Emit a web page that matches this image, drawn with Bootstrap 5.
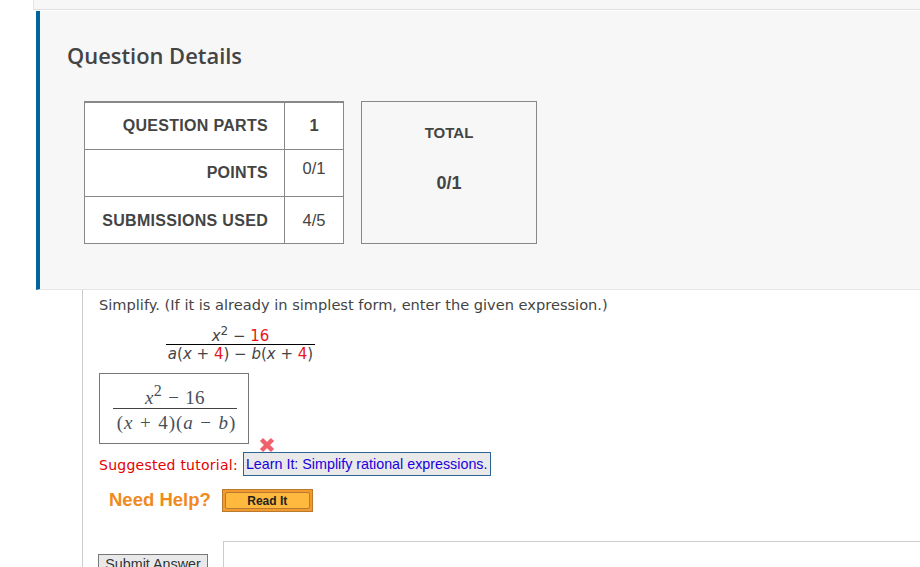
<!DOCTYPE html>
<html lang="en"><head><meta charset="utf-8">
<link href="https://cdn.jsdelivr.net/npm/bootstrap@5.3.0/dist/css/bootstrap.min.css" rel="stylesheet">
<style>
html,body{height:567px;overflow:hidden;background:#fff;}
body{font-family:"Liberation Sans",Arial,sans-serif;color:#444;}
.top-strip{margin-left:33px;height:10px;background:#f7f7f7;border-left:1px solid #e5e5e5;border-bottom:1px solid #e0e0e0;}
.details-panel{margin-left:36px;height:279px;margin-top:1px;background:#f7f7f7;border-left:4px solid #00659c;border-bottom:1px solid #e5e5e5;padding:30px 0 0 27px;}
.details-title{font-family:"Open Sans",sans-serif;font-size:21.9px;font-weight:600;line-height:30px;color:#444;margin:0;}
.tables-row{margin:30px 0 0 17px;gap:17px;}
.parts-table{width:260px;height:143px;background:#fff;border-collapse:collapse;border:1px solid #888;border-top-width:2px;font-size:16px;}
.parts-table tr{height:47px;}
.parts-table td,.parts-table th{border:1px solid #888;padding:0;}
.parts-table th{width:200px;text-align:right;padding-right:16px;font-weight:700;letter-spacing:.3px;}
.parts-table td{text-align:center;font-size:16.5px;}
.parts-table .cell-up{padding-bottom:8px;}
.parts-table .cell-down{padding-top:2px;}
.total-box{width:176px;height:143px;border:1px solid #888;text-align:center;font-size:15px;}
.total-label{font-weight:700;margin-top:21px;line-height:20px;}
.total-value{font-weight:700;margin-top:30px;line-height:20px;font-size:18px;}
.question-area{margin-left:82px;height:277px;border-left:1px solid #ccc;padding-left:16px;position:relative;}
.prompt{font-family:"DejaVu Sans",sans-serif;font-size:14.6px;line-height:20px;padding-top:5px;margin:0;color:#444;}
.frac-q{display:flex;flex-direction:column;align-items:center;margin:12px 0 0 67px;font-family:"DejaVu Sans",sans-serif;font-size:15px;line-height:18px;color:#444;width:149px;}
.frac-q .num{border-bottom:1px solid #000;width:100%;text-align:center;height:18px;}
.frac-q sup{font-size:12px;top:-.5em;line-height:0;}
.red{color:#e8161b;}
.answer-box{width:150px;height:71px;border:1px solid #777;margin-top:10px;display:flex;flex-direction:column;align-items:center;padding-top:11px;font-family:"Liberation Serif",serif;font-size:19px;line-height:25px;color:#44505a;word-spacing:1px;}
.answer-box .num{border-bottom:1px solid #444;width:124px;text-align:center;height:24px;line-height:26px;margin-left:2px;letter-spacing:.3px;}
.answer-box .den{letter-spacing:.9px;margin-top:1px;margin-left:5px;}
.answer-box sup{font-size:16px;top:-.5em;line-height:0;}
.answer-box i{font-style:italic;}
.x-mark{position:absolute;left:176px;top:147px;}
.tutorial-row{margin-top:8px;height:24px;gap:5px;}
.tutorial-label{font-family:"DejaVu Sans",sans-serif;font-size:14px;color:#e40000;letter-spacing:.25px;margin-top:2px;}
.tutorial-link{display:block;width:248px;height:24px;line-height:22px;border:1px solid #2a6496;background:#e9e9e9;color:#1a00dd;font-size:14.3px;padding:0 2px;text-decoration:none;white-space:nowrap;}
.help-row{margin:12px 0 0 10px;gap:11px;height:24px;}
.need-help{font-size:18.5px;font-weight:700;color:#f08a1d;}
.read-btn{width:91px;height:23px;padding:2px;background:#f39a2e;border:1px solid #b87a30;}
.read-inner{height:100%;background:#ffb93f;border:1px solid #b87a30;border-radius:2px;text-align:center;font-size:12px;line-height:16px;font-weight:700;color:#222;}
.submit-row{margin:29px 0 0 -1px;gap:15px;}
.submit-btn{width:110px;height:20px;margin-top:13px;background:#e9e9e9;border:1px solid #777;font-size:14.3px;color:#333;line-height:16px;padding:0;text-align:center;border-radius:0;white-space:nowrap;}
.work-box{flex:1;height:60px;border:1px solid #ccc;border-right:0;background:#fff;}
</style></head><body>
<div class="top-strip"></div>
<div class="details-panel">
<h2 class="details-title">Question Details</h2>
<div class="d-flex tables-row">
<table class="parts-table"><tbody>
<tr><th scope="row">QUESTION PARTS</th><td class="fw-bold">1</td></tr>
<tr><th scope="row">POINTS</th><td class="cell-up">0/1</td></tr>
<tr><th scope="row" class="cell-down">SUBMISSIONS USED</th><td>4/5</td></tr>
</tbody></table>
<div class="total-box"><div class="total-label">TOTAL</div><div class="total-value">0/1</div></div>
</div>
</div>
<div class="question-area">
<p class="prompt">Simplify. (If it is already in simplest form, enter the given expression.)</p>
<div class="frac-q"><div class="num"><i>x</i><sup>2</sup> − <span class="red">16</span></div><div><i>a</i>(<i>x</i> + <span class="red">4</span>) − <i>b</i>(<i>x</i> + <span class="red">4</span>)</div></div>
<div class="answer-box"><div class="num"><i>x</i><sup>2</sup> − 16</div><div class="den">(<i>x</i> + 4)(<i>a</i> − <i>b</i>)</div></div>
<svg class="x-mark" width="16" height="16" viewBox="0 0 16 16" aria-hidden="true"><path d="M2.5 2.5 13.5 13.5M13.5 2.5 2.5 13.5" stroke="#f0606c" stroke-width="4.5"/></svg>
<div class="d-flex align-items-center tutorial-row"><span class="tutorial-label">Suggested tutorial:</span><a class="tutorial-link" href="#">Learn It: Simplify rational expressions.</a></div>
<div class="d-flex align-items-center help-row"><span class="need-help">Need Help?</span><div class="read-btn"><div class="read-inner">Read It</div></div></div>
<div class="d-flex submit-row align-items-start"><button class="submit-btn" type="button">Submit Answer</button><div class="work-box"></div></div>
</div>
</body></html>
